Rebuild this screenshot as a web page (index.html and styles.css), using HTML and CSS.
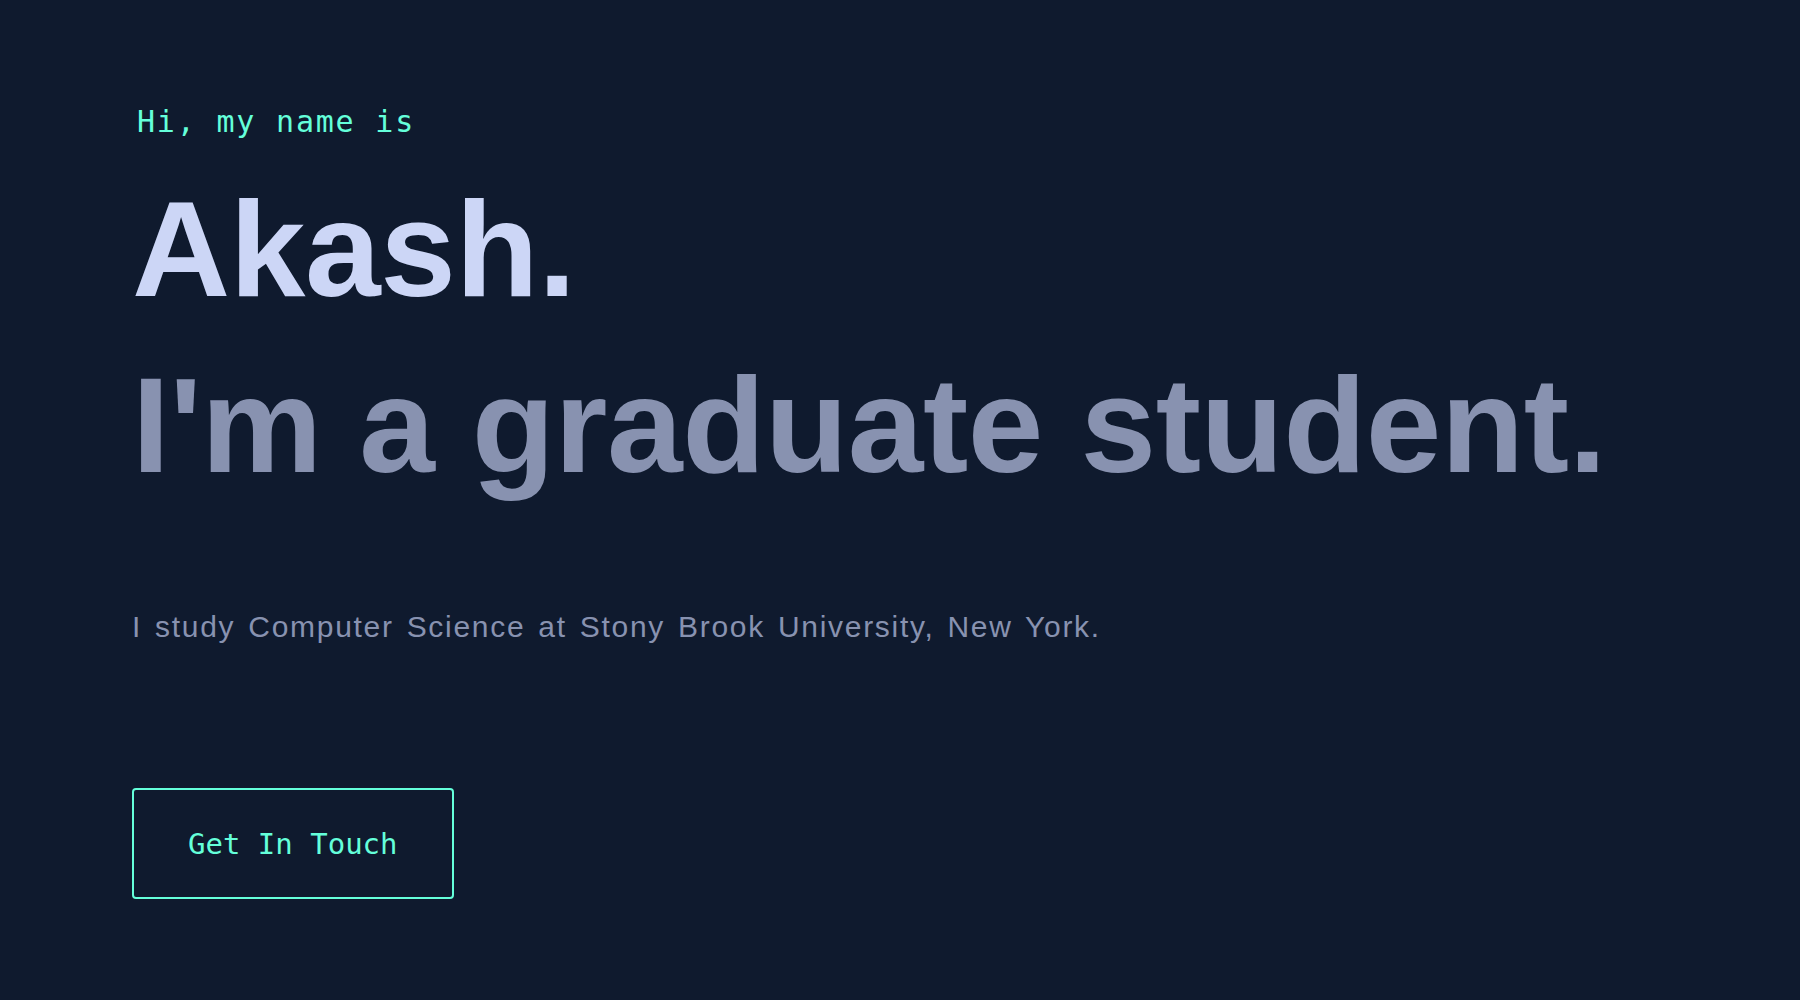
FILE: index.html
```html
<!DOCTYPE html>
<html lang="en">
<head>
<meta charset="utf-8">
<title>Akash</title>
<link rel="stylesheet" href="styles.css">
</head>
<body>
<main class="hero">
  <p class="greeting">Hi, my name is</p>
  <h1 class="name">Akash.</h1>
  <h2 class="tagline">I'm a graduate student.</h2>
  <p class="intro">I study Computer Science at Stony Brook University, New York.</p>
  <a class="cta" href="#contact">Get In Touch</a>
</main>
</body>
</html>
```
FILE: styles.css
```css
html, body {
  margin: 0;
  padding: 0;
  background: #0f1a2e;
}

body {
  min-height: 100vh;
  font-family: "Liberation Sans", Arial, sans-serif;
}

.hero {
  display: flex;
  flex-direction: column;
  align-items: flex-start;
  padding: 107px 132px 0 132px;
}

.greeting {
  margin: 0 0 0 5px;
  font-family: "DejaVu Sans Mono", monospace;
  font-size: 30px;
  line-height: 30px;
  letter-spacing: 1.8px;
  color: #64ffda;
}

.name,
.tagline {
  margin: 0;
  font-family: "Liberation Sans", Arial, sans-serif;
  font-weight: 700;
  font-size: 136px;
  line-height: 136px;
  letter-spacing: -0.4px;
  white-space: nowrap;
}

.name {
  margin-top: 44px;
  color: #ccd6f6;
}

.tagline {
  margin-top: 40px;
  color: #8892b0;
}

.intro {
  margin: 115px 0 0 0;
  font-family: "Liberation Sans", Arial, sans-serif;
  font-size: 30px;
  line-height: 38px;
  letter-spacing: 1.7px;
  word-spacing: 3px;
  color: #8892b0;
}

.cta {
  margin-top: 142px;
  padding: 40px 54px 38px 54px;
  border: 2px solid #64ffda;
  border-radius: 4px;
  font-family: "DejaVu Sans Mono", monospace;
  font-size: 29px;
  line-height: 29px;
  color: #64ffda;
  text-decoration: none;
}
```
